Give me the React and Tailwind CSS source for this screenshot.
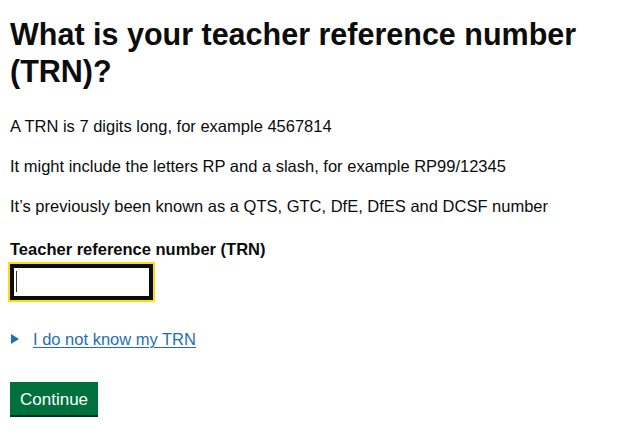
import { useState } from 'react'

function DetailsToggle({ summary }) {
  return (
    <div className="mt-[25px] flex items-center text-[16.5px] leading-[25px]">
      <svg width="8" height="10" viewBox="0 0 8 10" className="ml-[1px] mr-[14px] mt-[-2px] shrink-0" aria-hidden="true">
        <polygon points="0,0 8,5 0,10" fill="#1d70b8" />
      </svg>
      <a
        href="#trn-help"
        className="text-[#1d70b8] underline decoration-1 underline-offset-[2px]"
      >
        {summary}
      </a>
    </div>
  )
}

export default function App() {
  const [trn] = useState('')

  return (
    <div
      className="min-h-[442px] bg-white pl-[10px] pr-[10px] pt-[16px] text-[#0b0c0c]"
      style={{ fontFamily: '"Liberation Sans", Arial, sans-serif' }}
    >
      <h1 className="mb-[24px] text-[30.5px] font-bold leading-[37px]">
        What is your teacher reference number (TRN)?
      </h1>

      <p className="mb-[15px] text-[16.5px] leading-[25px]">A TRN is 7 digits long, for example 4567814</p>
      <p className="mb-[15px] text-[16.5px] leading-[25px]">
        It might include the letters RP and a slash, for example RP99/12345
      </p>
      <p className="mb-[18px] text-[16.5px] leading-[25px]">
        It’s previously been known as a QTS, GTC, DfE, DfES and DCSF number
      </p>

      <label htmlFor="trn" className="block text-[16.5px] font-bold leading-[25px]">
        Teacher reference number (TRN)
      </label>

      {/* focused input: yellow focus ring around a thick black border */}
      <div className="-ml-[2px] h-[40px] w-[147px] bg-[#ffdd00] p-[2px]">
        <div id="trn" className="flex h-full w-full border-[4px] border-[#0b0c0c] bg-white pl-[2px] pt-[3px]">
          {trn}
          <span className="block h-[21px] w-px bg-[#333]" />
        </div>
      </div>

      <DetailsToggle summary="I do not know my TRN" />

      <button
        type="button"
        className="mt-[30px] block bg-[#00703c] px-[10px] pb-[5px] pt-[8px] text-[17px] leading-[20px] text-white shadow-[0_2px_0_#002d18]"
      >
        Continue
      </button>
    </div>
  )
}
